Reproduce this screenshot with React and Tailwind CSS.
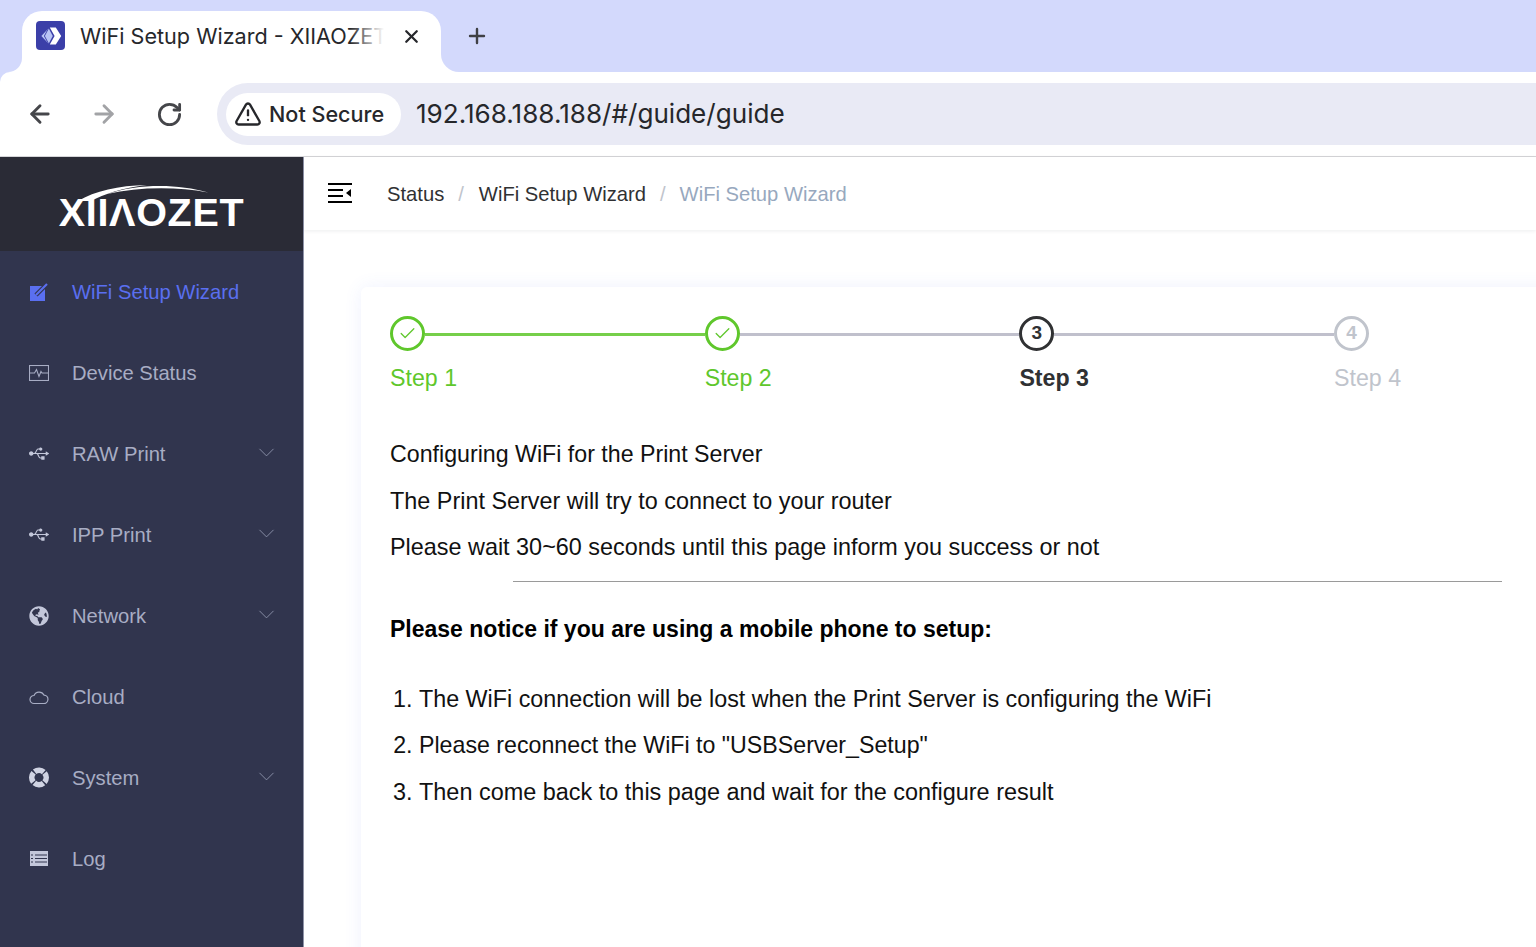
import React from 'react';
import { ArrowLeft, ArrowRight, RotateCw, X, Plus, TriangleAlert, ChevronDown, Check } from 'lucide-react';
import { FaUsb, FaGlobeAmericas } from 'react-icons/fa';

function EditIcon() {
  return (
    <svg viewBox="0 0 20 20" className="w-[20px] h-[20px]">
      <rect x="1" y="4" width="15" height="15" fill="#5a6ff0" />
      <path d="M7 13l10-10" stroke="#31354e" strokeWidth="4.5" />
      <path d="M7 13l11-11" stroke="#5a6ff0" strokeWidth="2.2" />
    </svg>
  );
}

function PulseIcon() {
  return (
    <svg viewBox="0 0 20 16" className="w-[20px] h-[16px]" fill="none" stroke="currentColor" strokeWidth="1.1">
      <rect x="0.5" y="0.5" width="19" height="15" />
      <path d="M0.5 8h5l2-3.5 2.5 7 2-5 1 1.5h6.500" />
    </svg>
  );
}

function CloudIcon() {
  return (
    <svg viewBox="0 0 20 16" className="w-[20px] h-[16px]" fill="none" stroke="currentColor" strokeWidth="1.2">
      <path d="M5 14.500H14.500a4.200 4.200 0 0 0 0.500-8.400A5.500 5.500 0 0 0 5 6.500a4 4 0 0 0 0 8z" />
    </svg>
  );
}

function RingIcon() {
  return (
    <svg viewBox="0 0 20 20" className="w-[21px] h-[21px]" fill="none" stroke="#d0d3e2">
      <circle cx="10" cy="10" r="7.200" strokeWidth="5.600" strokeDasharray="9.800 1.510" transform="rotate(-39 10 10)" />
    </svg>
  );
}

function LogIcon() {
  return (
    <svg viewBox="0 0 18 15" className="w-[18px] h-[15px]">
      <rect width="18" height="15" fill="#c3c7da" />
      <path d="M1 4h2M5 4h12M1 7.500h2M5 7.500h12M1 11h2M5 11h12" stroke="#31354e" strokeWidth="1" />
    </svg>
  );
}

const menu = [
  { label: 'WiFi Setup Wizard', icon: <EditIcon />, active: true },
  { label: 'Device Status', icon: <PulseIcon /> },
  { label: 'RAW Print', icon: <FaUsb size={21} className="text-[#c3c7da]" />, arrow: true },
  { label: 'IPP Print', icon: <FaUsb size={21} className="text-[#c3c7da]" />, arrow: true },
  { label: 'Network', icon: <FaGlobeAmericas size={20} className="text-[#c3c7da]" />, arrow: true },
  { label: 'Cloud', icon: <CloudIcon /> },
  { label: 'System', icon: <RingIcon />, arrow: true },
  { label: 'Log', icon: <LogIcon /> },
];

function Sidebar() {
  return (
    <aside className="w-[304px] shrink-0 flex flex-col bg-[#31354e] border-r border-[#8f93a8]">
      <div className="h-[94px] bg-[#2a2b36] flex items-center justify-center relative">
        <svg viewBox="60 180 190 30" className="absolute left-[60px] top-[23px] w-[190px] h-[30px]">
          <path d="M78 201C95 191 118 185.500 147 185 122 188 104 194 91 201z" fill="#fff" />
          <path d="M107 194C138 183.500 178 183.500 208 192.500 176 186.500 138 187 107 194z" fill="#fff" />
        </svg>
        <span className="mt-[17px] ml-[0px] text-white font-bold text-[39.500px] tracking-[0.7px] leading-none whitespace-nowrap">
          XIIΛOZET
        </span>
      </div>
      {menu.map((item) => (
        <div
          key={item.label}
          className={`h-[81px] flex items-center pl-[29px] pr-[23px] text-[20.200px] ${item.active ? 'text-[#5a6ff0]' : 'text-[#a8adc4]'}`}
        >
          <span className="w-[20px] flex justify-center shrink-0">{item.icon}</span>
          <span className="ml-[23px] flex-1 pt-[2px]">{item.label}</span>
          {item.arrow && <ChevronDown size={27} strokeWidth={0.8} className="mb-[2px] text-[#8f94ad]" />}
        </div>
      ))}
    </aside>
  );
}

function StepCircle({ state, n }) {
  if (state === 'done') {
    return (
      <div className="w-[35px] h-[35px] rounded-full border-[3px] border-[#5fc72c] flex items-center justify-center shrink-0 text-[#5fc72c]">
        <Check size={19} strokeWidth={1.6} />
      </div>
    );
  }
  const cls = state === 'current' ? 'border-[#303133] text-[#303133]' : 'border-[#c0c4cc] text-[#c0c4cc]';
  return (
    <div className={`w-[35px] h-[35px] rounded-full border-[3px] flex items-center justify-center shrink-0 text-[19px] font-bold ${cls}`}>
      {n}
    </div>
  );
}

const steps = [
  { n: 1, state: 'done', line: 'bg-[#76cf4a]', text: 'text-[#5fc72c]' },
  { n: 2, state: 'done', line: 'bg-[#c0c0cc]', text: 'text-[#5fc72c]' },
  { n: 3, state: 'current', line: 'bg-[#c0c0cc]', text: 'text-[#303133] font-bold' },
  { n: 4, state: 'wait', text: 'text-[#c0c4cc]' },
];

function Steps() {
  return (
    <div className="flex">
      {steps.map((s) => (
        <div key={s.n} className="w-[314.700px] shrink-0">
          <div className="flex items-center">
            <StepCircle state={s.state} n={s.n} />
            {s.line && <div className={`h-[3px] flex-1 mt-[1px] ${s.line}`} />}
          </div>
          <div className={`mt-[12px] text-[23.200px] leading-[30px] ${s.text}`}>Step {s.n}</div>
        </div>
      ))}
    </div>
  );
}

function BrowserChrome() {
  return (
    <div className="shrink-0 font-['Inter',sans-serif] bg-[#d3d9fc]">
      <div className="h-[72px] flex items-end pl-[22px]">
        <div className="relative w-[419px] h-[61px] bg-white rounded-t-[20px] flex items-start pl-[14px] pt-[10px]">
          <div className="absolute left-[-14px] bottom-0 w-[14px] h-[14px] bg-white">
            <div className="w-full h-full bg-[#d3d9fc] rounded-br-[14px]" />
          </div>
          <div className="absolute right-[-18px] bottom-0 w-[18px] h-[18px] bg-white">
            <div className="w-full h-full bg-[#d3d9fc] rounded-bl-[18px]" />
          </div>
          <div className="w-[29px] h-[29px] rounded-[4px] bg-[#3b3fa8] flex items-center justify-center shrink-0">
            <svg viewBox="0 0 20 20" className="w-[24px] h-[24px]">
              <path d="M9 3h5l4.500 7-4.500 7H9l4-7z" fill="#fff" />
              <path d="M8 3.500L2 10l6 6.500 3.500-6.500z" fill="#b9c4f5" />
              <path d="M8 3.500L4.500 10 8 16.500" stroke="#3b3fa8" strokeWidth="0.800" fill="none" />
            </svg>
          </div>
          <div className="relative ml-[15px] w-[304px] overflow-hidden whitespace-nowrap text-[21.600px] leading-[30px] h-[31px] text-[#26272b]">
            WiFi Setup Wizard - XIIAOZET
            <div className="absolute right-0 top-0 bottom-0 w-[34px] bg-gradient-to-r from-transparent to-white" />
          </div>
          <X size={21} strokeWidth={2.6} className="ml-[17px] mt-[5px] shrink-0 text-[#26272b]" />
          <div className="absolute left-[443px] top-[13px] text-[#3f4045]">
            <Plus size={24} strokeWidth={2.4} />
          </div>
        </div>
      </div>
      <div className="h-[84px] bg-white flex items-start pt-[11px] rounded-tl-[10px]">
        <div className="flex items-center h-[62px] shrink-0 pl-[26px] text-[#45464a]">
          <ArrowLeft size={28} strokeWidth={2.500} />
          <ArrowRight size={28} strokeWidth={2.500} className="ml-[36px] text-[#a2a3a6]" />
          <RotateCw size={27} strokeWidth={2.500} className="ml-[38px]" />
        </div>
        <div className="ml-[34px] flex-1 h-[62px] bg-[#e9eaf5] rounded-l-[31px] flex items-center pl-[9px]">
          <div className="h-[43px] w-[175px] bg-white rounded-full flex items-center pl-[8px] text-[#26272b]">
            <TriangleAlert size={28} strokeWidth={2} />
            <span className="ml-[7px] text-[21.600px] font-medium whitespace-nowrap">Not Secure</span>
          </div>
          <span className="ml-[15px] text-[26.100px] text-[#26272b] whitespace-nowrap">192.168.188.188/#/guide/guide</span>
        </div>
      </div>
      <div className="h-px bg-[#d5d5d8]" />
    </div>
  );
}

export default function App() {
  return (
    <div className="w-[1536px] h-[947px] overflow-hidden flex flex-col bg-white font-['Liberation_Sans',Arial,sans-serif]">
      <BrowserChrome />
      <div className="flex-1 flex min-h-0">
        <Sidebar />
        <main className="flex-1 min-w-0 flex flex-col">
          <header className="h-[73px] shrink-0 flex items-center pl-[24px] shadow-[0_1px_4px_rgba(0,21,41,0.08)] text-[20.200px]">
            <svg viewBox="0 0 24 20" className="w-[24px] h-[20px] mb-[2px] text-black" fill="currentColor">
              <rect x="0" y="0" width="24" height="2" />
              <rect x="0" y="6" width="15" height="2" />
              <rect x="0" y="12" width="15" height="2" />
              <rect x="0" y="18" width="24" height="2" />
              <path d="M23 6v8l-5-4z" />
            </svg>
            <span className="ml-[35px] pt-[2px] text-[#303133]">Status</span>
            <span className="ml-[14px] mr-[15px] pt-[2px] text-[#c0c4cc]">/</span>
            <span className="pt-[2px] text-[#303133]">WiFi Setup Wizard</span>
            <span className="mx-[14px] pt-[2px] text-[#c0c4cc]">/</span>
            <span className="pt-[2px] text-[#97a8be]">WiFi Setup Wizard</span>
          </header>
          <div className="flex-1 min-h-0 pl-[57px] pt-[57px]">
            <div className="w-[1300px] h-[700px] rounded-[6px] bg-white shadow-[0_0_18px_rgba(80,110,240,0.09)] pl-[29px] pt-[29px] text-[23.300px] text-[#111]">
              <Steps />
              <div className="mt-[38px] leading-[46.500px]">
                <p className="text-[23.200px]">Configuring WiFi for the Print Server</p>
                <p className="text-[23.400px]">The Print Server will try to connect to your router</p>
                <p className="text-[23.400px]">Please wait 30~60 seconds until this page inform you success or not</p>
              </div>
              <div className="ml-[123px] mt-[10px] w-[989px] h-px bg-[#9a9a9a]" />
              <p className="mt-[24px] leading-[46.500px] text-[23px] font-bold text-black">Please notice if you are using a mobile phone to setup:</p>
              <ol className="mt-[24px] leading-[46.400px] list-decimal pl-[29px]">
                <li>The WiFi connection will be lost when the Print Server is configuring the WiFi</li>
                <li className="text-[23.200px]">Please reconnect the WiFi to "USBServer_Setup"</li>
                <li className="text-[23.450px]">Then come back to this page and wait for the configure result</li>
              </ol>
            </div>
          </div>
        </main>
      </div>
    </div>
  );
}
